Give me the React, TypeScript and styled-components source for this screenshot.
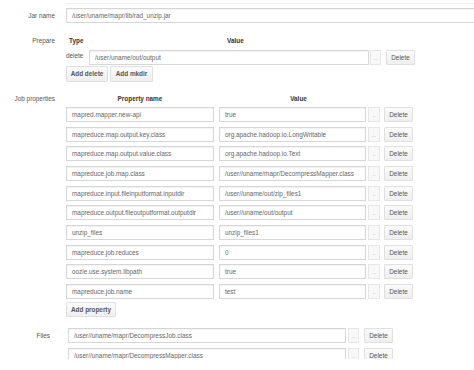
import styled, { createGlobalStyle } from 'styled-components';

const GlobalStyle = createGlobalStyle`
  html, body {
    margin: 0;
    background: #fff;
  }
  body {
    font-family: "Liberation Sans", Arial, sans-serif;
    font-size: 6.4px;
    color: #555;
  }
`;

const jobProps = [
  ['mapred.mapper.new-api', 'true'],
  ['mapreduce.map.output.key.class', 'org.apache.hadoop.io.LongWritable'],
  ['mapreduce.map.output.value.class', 'org.apache.hadoop.io.Text'],
  ['mapreduce.job.map.class', '/user//uname/mapr/DecompressMapper.class'],
  ['mapreduce.input.fileinputformat.inputdir', '/user//uname/out/zip_files1'],
  ['mapreduce.output.fileoutputformat.outputdir', '/user//uname/out/output'],
  ['unzip_files', 'unzip_files1'],
  ['mapreduce.job.reduces', '0'],
  ['oozie.use.system.libpath', 'true'],
  ['mapreduce.job.name', 'test'],
];

const files = [
  '/user//uname/mapr/DecompressJob.class',
  '/user//uname/mapr/DecompressMapper.class',
];

const App = () => {
  return (
    <>
      <GlobalStyle />
      <Page>
        <TopRule />

        <Section $top={4}>
          <Label $lh={15}>Jar name</Label>
          <Field $w={420}>/user/uname/mapr/lib/rad_unzip.jar</Field>
        </Section>

        <Section $top={13}>
          <Label $lh={10}>Prepare</Label>
          <div>
            <HeadRow>
              <HeadCell $w={161} $pl={3}>Type</HeadCell>
              <HeadCell>Value</HeadCell>
            </HeadRow>
            <Row $top={4}>
              <TypeText>delete</TypeText>
              <Field $w={280}>/user/uname/out/output</Field>
              <Dots $ml={1}>...</Dots>
              <DeleteButton $ml={5}>Delete</DeleteButton>
            </Row>
            <ButtonRow $top={1}>
              <AddButton $w={42} $h={16}>Add delete</AddButton>
              <AddButton $w={43} $h={16}>Add mkdir</AddButton>
            </ButtonRow>
          </div>
        </Section>

        <Section $top={12}>
          <Label $lh={10}>Job properties</Label>
          <div>
            <HeadRow>
              <HeadCell $w={148} $center>Property name</HeadCell>
              <HeadCell $w={164} $center $pl={5}>Value</HeadCell>
            </HeadRow>
            <PropList>
              {jobProps.map(([name, value]) => (
                <Row key={name}>
                  <Field $w={148}>{name}</Field>
                  <Field $w={147} $ml={5}>{value}</Field>
                  <Dots $ml={2} $w={12}>...</Dots>
                  <DeleteButton $ml={4}>Delete</DeleteButton>
                </Row>
              ))}
            </PropList>
            <ButtonRow $top={3}>
              <AddButton $w={50} $h={15}>Add property</AddButton>
            </ButtonRow>
          </div>
        </Section>

        <Section $top={11}>
          <Label $lh={15} $pr={5}>Files</Label>
          <FileList>
            {files.map((f) => (
              <Row key={f}>
                <Field $w={278}>{f}</Field>
                <Dots $ml={2}>...</Dots>
                <DeleteButton $ml={5}>Delete</DeleteButton>
              </Row>
            ))}
          </FileList>
        </Section>
      </Page>
    </>
  );
};

export default App;

const Page = styled.div`
  width: 474px;
  height: 359px;
  overflow: hidden;
`;

const TopRule = styled.div`
  margin-left: 66px;
  height: 3px;
  border-bottom: 1px solid #f0f0f0;
`;

const Section = styled.div<{ $top: number }>`
  display: grid;
  grid-template-columns: 55px 1fr;
  column-gap: 11px;
  align-items: start;
  margin-top: ${(p) => p.$top}px;
`;

const Label = styled.div<{ $lh: number; $pr?: number }>`
  text-align: right;
  line-height: ${(p) => p.$lh}px;
  padding-right: ${(p) => p.$pr ?? 0}px;
  color: #555;
  white-space: nowrap;
`;

const HeadRow = styled.div`
  display: flex;
  height: 10px;
  line-height: 10px;
`;

const HeadCell = styled.div<{ $w?: number; $pl?: number; $center?: boolean }>`
  width: ${(p) => (p.$w ? `${p.$w}px` : 'auto')};
  padding-left: ${(p) => p.$pl ?? 0}px;
  box-sizing: border-box;
  text-align: ${(p) => (p.$center ? 'center' : 'left')};
  font-weight: bold;
  color: #333;
  flex-shrink: 0;
`;

const Row = styled.div<{ $top?: number }>`
  display: flex;
  align-items: flex-start;
  height: 15px;
  margin-top: ${(p) => p.$top ?? 0}px;
`;

const PropList = styled.div`
  display: flex;
  flex-direction: column;
  gap: 4.67px;
  margin-top: 3px;
`;

const FileList = styled.div`
  display: flex;
  flex-direction: column;
  gap: 5px;
  margin-left: 2px;
`;

const TypeText = styled.div`
  width: 23px;
  line-height: 11px;
  color: #555;
  flex-shrink: 0;
`;

const Field = styled.div<{ $w: number; $ml?: number }>`
  width: ${(p) => p.$w}px;
  height: 15px;
  margin-left: ${(p) => p.$ml ?? 0}px;
  box-sizing: border-box;
  flex-shrink: 0;
  padding: 0 5px;
  border: 1px solid #d6d6d6;
  box-shadow: inset 0 1px 1px rgba(0, 0, 0, 0.05);
  background: #fff;
  line-height: 13px;
  color: #666;
  white-space: nowrap;
  overflow: hidden;
`;

const Dots = styled.div<{ $ml?: number; $w?: number }>`
  width: ${(p) => p.$w ?? 11}px;
  height: 15px;
  margin-left: ${(p) => p.$ml ?? 0}px;
  box-sizing: border-box;
  flex-shrink: 0;
  border: 1px solid #e6e6e6;
  background: #f8f8f8;
  color: #aaa;
  font-size: 5px;
  line-height: 14px;
  text-align: center;
`;

const DeleteButton = styled.div<{ $ml?: number }>`
  width: 29px;
  height: 15px;
  margin-left: ${(p) => p.$ml ?? 0}px;
  box-sizing: border-box;
  flex-shrink: 0;
  border: 1px solid #e0e0e0;
  border-radius: 1px;
  background: linear-gradient(#fbfbfb, #efefef);
  color: #555;
  line-height: 13px;
  text-align: center;
`;

const ButtonRow = styled.div<{ $top: number }>`
  display: flex;
  gap: 2px;
  margin-top: ${(p) => p.$top}px;
`;

const AddButton = styled.div<{ $w: number; $h: number }>`
  width: ${(p) => p.$w}px;
  height: ${(p) => p.$h}px;
  box-sizing: border-box;
  border: 1px solid #e0e0e0;
  border-radius: 1px;
  background: linear-gradient(#fbfbfb, #efefef);
  color: #555;
  font-weight: bold;
  line-height: ${(p) => p.$h - 2}px;
  text-align: center;
  white-space: nowrap;
`;
